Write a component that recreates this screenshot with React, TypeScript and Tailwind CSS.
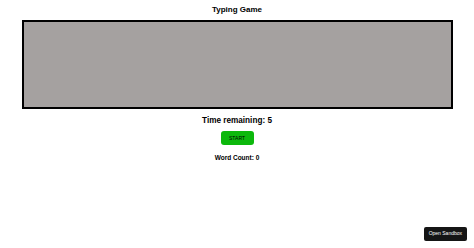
import { useState } from "react";

export default function App() {
  const [text, setText] = useState("");
  const [time] = useState(5);
  const [wordCount] = useState(0);

  return (
    <div className="relative h-[248px] w-full bg-white font-['Liberation_Sans',Arial,sans-serif] text-black">
      <div className="flex flex-col items-center pt-[4px]">
        <h1 className="text-[8px] font-bold leading-[12px]">Typing Game</h1>
        <textarea
          value={text}
          onChange={(e) => setText(e.target.value)}
          className="mt-[4px] h-[89px] w-[431px] resize-none border-2 border-black bg-[#a5a1a0] outline-none"
        />
        <h2 className="mt-[6px] text-[8.2px] font-bold leading-[12px]">
          Time remaining: {time}
        </h2>
        <button
          type="button"
          className="mt-[4px] h-[14px] w-[33px] rounded-[3px] bg-[#0cb80c] text-[5px] leading-none"
        >
          START
        </button>
        <h3 className="mt-[8px] text-[6.5px] font-bold leading-[9px]">
          Word Count: {wordCount}
        </h3>
      </div>
      <button
        type="button"
        className="absolute bottom-[7px] right-[7px] h-[14px] rounded-[2px] bg-[#151515] px-[5px] text-[5px] text-white"
      >
        Open Sandbox
      </button>
    </div>
  );
}
